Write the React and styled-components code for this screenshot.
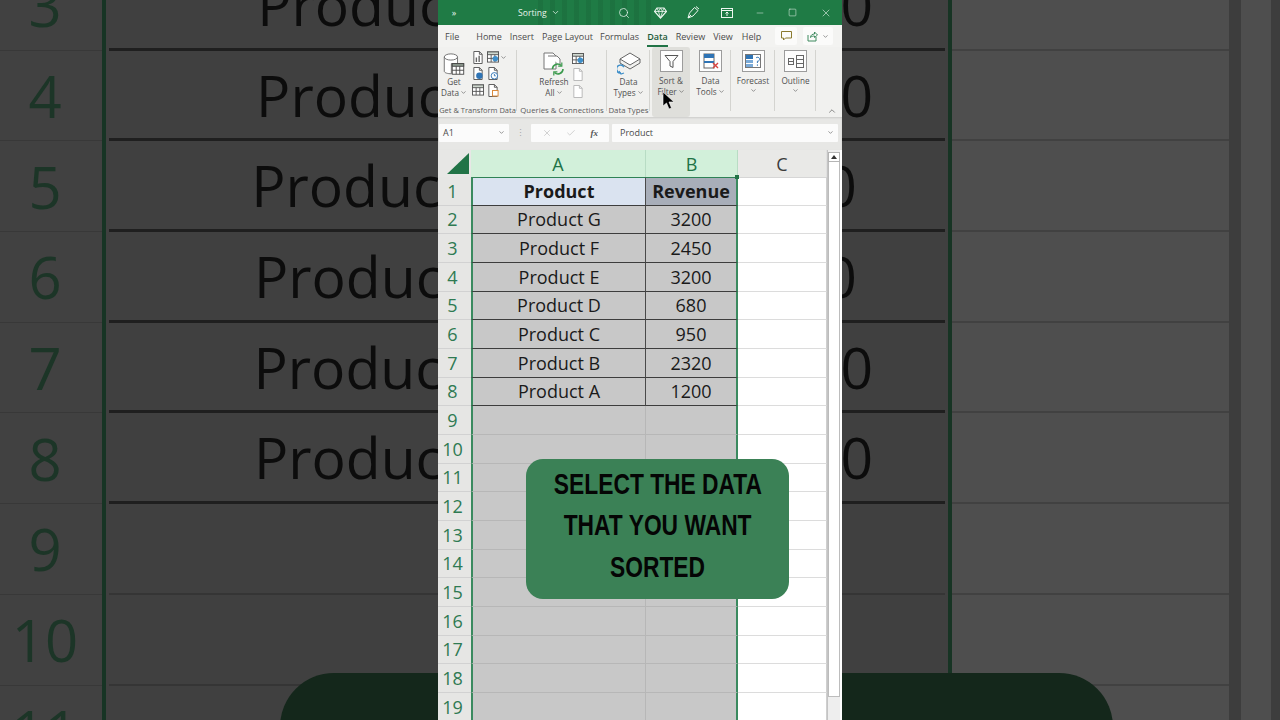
import React from "react";
import styled, { createGlobalStyle } from "styled-components";
import { ChevronDown, ChevronUp, Minus, Search, Square, X, Check } from "lucide-react";

const UI_FONT = `"Open Sans", "Noto Sans", sans-serif`;

const GlobalStyle = createGlobalStyle`
  html, body {
    margin: 0;
    padding: 0;
    width: 100%;
    height: 100%;
    overflow: hidden;
    background: #404040;
  }
  * { box-sizing: border-box; }
`;

const Page = styled.div`
  position: relative;
  display: flex;
  width: 1280px;
  height: 720px;
  overflow: hidden;
`;

/* dimmed, zoomed copy of the sheet behind the video */
const SidePanel = styled.div`
  width: 438px;
  flex-shrink: 0;
  height: 720px;
  overflow: hidden;
  background: #404040;
`;

const BackRows = styled.div`
  margin-top: -40px;
`;

const BackRow = styled.div`
  display: flex;
  height: 90.7px;
`;

const BackNumber = styled.div`
  width: 102px;
  flex-shrink: 0;
  display: flex;
  align-items: center;
  justify-content: center;
  padding-right: 12px;
  border-bottom: 1px solid #383838;
  color: #1c3527;
  font: 400 58px ${UI_FONT};
  background: #414141;
`;

const BackEdge = styled.div`
  width: 4px;
  flex-shrink: 0;
  margin-left: ${(p) => p.$offset || 0}px;
  background: #173424;
`;

const BackCell = styled.div`
  width: ${(p) => p.$width}px;
  flex-shrink: 0;
  margin-left: ${(p) => p.$offset}px;
  display: flex;
  align-items: center;
  justify-content: center;
  white-space: nowrap;
  border-bottom: ${(p) => (p.$filled ? "3px solid #1f1f1f" : "2px solid #353535")};
  color: #0c0c0c;
  font: 400 57px ${UI_FONT};
`;

const BackBlank = styled.div`
  width: 277px;
  flex-shrink: 0;
  background: #4e4e4e;
  border-bottom: 2px solid #414141;
`;

const BackScroll = styled.div`
  flex-shrink: 0;
  width: 52px;
  background: #4e4e4e;
  border-left: 12px solid #3d3d3d;
  border-right: 10px solid #3d3d3d;
`;

const BigCallout = styled.div`
  position: absolute;
  left: 280px;
  top: 673px;
  width: 833px;
  height: 440px;
  border-radius: 54px;
  background: #14271b;
  padding-top: 35px;
  text-align: center;
`;

const BigCalloutText = styled.span`
  display: inline-block;
  transform: scaleX(0.76);
  white-space: nowrap;
  color: #020402;
  font: 700 96px "Liberation Sans", sans-serif;
  line-height: 1;
`;

/* the Excel window */
const Window = styled.div`
  position: relative;
  z-index: 1;
  width: 404px;
  flex-shrink: 0;
  height: 720px;
  display: flex;
  flex-direction: column;
  background: #fff;
  overflow: hidden;
`;

const TitleBar = styled.div`
  height: 25px;
  flex-shrink: 0;
  display: flex;
  align-items: center;
  color: #e8f3ec;
  background-color: #1f7b45;
  background-image: repeating-linear-gradient(90deg, rgba(0, 0, 0, 0.07) 0 5px, transparent 5px 12px);
  background-size: 120px 100%;
  background-position: 100px 0;
  background-repeat: no-repeat;
  font: 400 8.6px ${UI_FONT};
`;

const More = styled.span`
  width: 32px;
  flex-shrink: 0;
  text-align: center;
  font-size: 9px;
`;

const DocName = styled.span`
  margin-left: 48px;
  width: 90px;
  flex-shrink: 0;
  display: flex;
  align-items: center;
  gap: 4px;
`;

const TitleIcon = styled.span`
  width: ${(p) => p.$width || 33}px;
  height: 25px;
  flex-shrink: 0;
  display: flex;
  align-items: center;
  justify-content: ${(p) => (p.$width ? "flex-start" : "center")};
  padding-left: ${(p) => (p.$width ? 10 : 0)}px;
`;

const TabBar = styled.div`
  height: 22px;
  flex-shrink: 0;
  display: flex;
  align-items: center;
  background: #f3f3f1;
  padding: 0 9px 0 7px;
  font: 400 9px ${UI_FONT};
  color: #4a4a4a;
`;

const Tab = styled.span`
  position: relative;
  margin-right: ${(p) => p.$gap}px;
  white-space: nowrap;
  color: ${(p) => (p.$active ? "#1d5c3a" : "#4a4a4a")};
  font-weight: ${(p) => (p.$active ? 600 : 400)};

  &::after {
    content: "";
    display: ${(p) => (p.$active ? "block" : "none")};
    position: absolute;
    left: 0;
    right: 0;
    bottom: -4px;
    height: 2px;
    background: #217346;
  }
`;

const TabActions = styled.div`
  margin-left: auto;
  display: flex;
  gap: 6px;
`;

const TabAction = styled.span`
  height: 18px;
  display: flex;
  align-items: center;
  justify-content: center;
  gap: 4px;
  width: ${(p) => p.$width}px;
  background: #fbfbfa;
  border-radius: 2px;
`;

const Ribbon = styled.div`
  height: 70px;
  flex-shrink: 0;
  display: flex;
  background: #f1f1ef;
  font: 400 8.2px ${UI_FONT};
  color: #505050;
`;

const Group = styled.div`
  position: relative;
  width: ${(p) => p.$width}px;
  flex-shrink: 0;
  display: flex;
  flex-direction: column;
  &::after {
    content: "";
    display: ${(p) => (p.$plain ? "none" : "block")};
    position: absolute;
    right: 0;
    top: 3px;
    bottom: 6px;
    width: 1px;
    background: #d4d4d0;
  }
`;

const GroupBody = styled.div`
  flex: 1;
  min-height: 0;
  display: flex;
  justify-content: ${(p) => p.$justify || "center"};
  gap: ${(p) => p.$gap || 0}px;
  padding: ${(p) => p.$padding || "0"};
`;

const GroupLabel = styled.div`
  height: 14px;
  display: flex;
  justify-content: center;
  white-space: nowrap;
  font-size: ${(p) => p.$size || 7.8}px;
  line-height: 14px;
  color: #5a5a5a;
`;

const RibbonButton = styled.div`
  display: flex;
  flex-direction: column;
  align-items: center;
  flex-shrink: 0;
  width: ${(p) => p.$width || 38}px;
  padding-top: ${(p) => p.$top ?? 3}px;
  border-radius: 3px;
  background: ${(p) => (p.$hover ? "#dfdfdb" : "transparent")};
  line-height: 11px;
  text-align: center;
`;

const ButtonText = styled.div`
  margin-top: ${(p) => p.$top ?? 2}px;
  display: flex;
  align-items: center;
  justify-content: center;
  gap: 1px;
  white-space: nowrap;
`;

const IconBox = styled.div`
  width: 23px;
  height: 22px;
  display: flex;
  align-items: center;
  justify-content: center;
  background: #fdfdfd;
  border: 1px solid #9c9c9c;
`;

const IconGrid = styled.div`
  display: grid;
  grid-template-columns: ${(p) => p.$columns};
  grid-auto-rows: ${(p) => p.$row}px;
  justify-items: start;
  align-items: center;
`;

const IconWithCaret = styled.span`
  display: flex;
  align-items: center;
  gap: 1px;
`;

const Collapse = styled.div`
  flex: 1;
  display: flex;
  align-items: flex-end;
  justify-content: flex-end;
  padding: 0 5px 1px 0;
`;

const FormulaBar = styled.div`
  height: 33px;
  flex-shrink: 0;
  display: flex;
  align-items: center;
  padding: 0 4px 2px 1px;
  background: #e7e7e5;
  box-shadow: inset 0 1px 2px rgba(0, 0, 0, 0.12);
  font: 400 9px ${UI_FONT};
  color: #4a4a4a;
`;

const FieldBox = styled.div`
  height: 18px;
  width: ${(p) => p.$width}px;
  margin-right: ${(p) => p.$gap || 0}px;
  flex-shrink: ${(p) => (p.$grow ? 1 : 0)};
  flex-grow: ${(p) => (p.$grow ? 1 : 0)};
  display: flex;
  align-items: center;
  justify-content: ${(p) => p.$justify || "space-between"};
  padding: 0 4px 0 ${(p) => p.$left || 4}px;
  background: #fbfbfb;
  border-radius: 1px;
`;

const Dots = styled.span`
  width: 22px;
  text-align: center;
  color: #a8a8a8;
  font-size: 9px;
`;

const FxLabel = styled.span`
  font: italic 700 9px "Liberation Serif", serif;
  color: #555;
`;

const SheetWrap = styled.div`
  flex: 1;
  display: flex;
  min-height: 0;
  background: #e7e7e5;
`;

const Grid = styled.div`
  width: 389px;
  flex-shrink: 0;
  display: grid;
  grid-template-columns: 33px 175px 92px 89px;
  grid-template-rows: 27px;
  grid-auto-rows: 28.67px;
  background: #fff;
  font: 400 18px ${UI_FONT};
`;

const Corner = styled.div`
  display: flex;
  align-items: flex-end;
  justify-content: flex-end;
  padding: 0 2px 3px 0;
  background: #e7e7e5;
`;

const ColumnHead = styled.div`
  display: flex;
  align-items: center;
  justify-content: center;
  padding-top: 1px;
  background: ${(p) => (p.$selected ? "#d2f0da" : "#e9e9e7")};
  color: ${(p) => (p.$selected ? "#217346" : "#3c3c3c")};
  border-right: 1px solid ${(p) => (p.$selected ? "#b8dcc4" : "#e0e0e0")};
`;

const RowHead = styled.div`
  display: flex;
  align-items: center;
  justify-content: center;
  padding-right: 4px;
  background: #e6e6e4;
  color: #2f7a52;
  border-bottom: 1px solid #d2d2d2;
`;

const Cell = styled.div`
  position: relative;
  display: flex;
  align-items: center;
  justify-content: center;
  white-space: nowrap;
  color: #1a1a1a;
  background: ${(p) => p.$bg};
  font-weight: ${(p) => (p.$bold ? 700 : 400)};
  border-bottom: 1px solid ${(p) => (p.$filled ? "#3d3d3d" : "#b7b7b7")};
  border-right: 1px solid ${(p) => (p.$filled ? "#4a4a4a" : "#b7b7b7")};
  border-left: ${(p) => (p.$edge === "left" ? "2px solid #3a8a5f" : "0")};
  border-top: ${(p) => (p.$top ? "1px solid #2f8256" : "0")};
  ${(p) => p.$edge === "right" && "border-right: 2px solid #3a8a5f;"}
`;

const Handle = styled.span`
  position: absolute;
  right: -3px;
  top: -3px;
  width: 4px;
  height: 4px;
  background: #217346;
`;

const EmptyCell = styled.div`
  border-bottom: 1px solid #dcdcdc;
  border-right: 1px solid #cfcfcf;
  border-top: ${(p) => (p.$top ? "1px solid #d6d6d6" : "0")};
`;

const Scrollbar = styled.div`
  width: 13px;
  flex-shrink: 0;
  display: flex;
  flex-direction: column;
  padding-top: 2px;
  background: #eeeeee;
  border-left: 1px solid #c4c4c4;
`;

const ScrollButton = styled.div`
  height: 10px;
  display: flex;
  align-items: center;
  justify-content: center;
  background: #fff;
  border: 1px solid #b5b5b5;
`;

const ScrollThumb = styled.div`
  height: 535px;
  background: #fff;
  border: 1px solid #bcbcbc;
  border-top: 0;
`;

const WindowEdge = styled.div`
  width: 2px;
  flex-shrink: 0;
  background: #fff;
`;

const Callout = styled.div`
  position: absolute;
  left: 88px;
  top: 459px;
  width: 263px;
  height: 140px;
  display: flex;
  flex-direction: column;
  align-items: center;
  justify-content: center;
  padding-bottom: 8px;
  border-radius: 17px;
  background: #3b8156;
`;

const CalloutLine = styled.span`
  display: block;
  height: 41.5px;
  white-space: nowrap;
  transform: scaleX(0.76);
  color: #050505;
  font: 700 30px/41.5px "Liberation Sans", sans-serif;
`;

const Pointer = styled.svg`
  position: absolute;
  left: 224px;
  top: 91px;
`;

const Caret = () => <ChevronDown size={7} strokeWidth={2} color="#555" />;

const PageIcon = ({ tint = "#555", children, size = 12 }) => (
  <svg width={size} height={size + 1} viewBox="0 0 13 14" fill="none">
    <path d="M2 .5h6l3 3v10H2z" fill="#fff" stroke={tint} strokeWidth="1" />
    <path d="M8 .5v3h3" stroke={tint} strokeWidth="1" />
    {children}
  </svg>
);

const TableIcon = ({ w = 12, h = 12, accent }) => (
  <svg width={w} height={h} viewBox="0 0 13 12" fill="none">
    <rect x=".5" y=".5" width="12" height="11" fill="#fff" stroke="#555" />
    <rect x=".5" y=".5" width="12" height="3" fill="#cfd8cf" stroke="#555" />
    <path d="M4.5 3.5v8M8.5 3.5v8M.5 7.5h12" stroke="#555" />
    {accent && <circle cx="9" cy="8" r="3" fill={accent} />}
  </svg>
);

const GetDataIcon = () => (
  <svg width="22" height="23" viewBox="0 0 24 26" fill="none">
    <path d="M1 4.5v16c0 2 4 3 8 3V12h7V4.5" fill="#fff" stroke="#666" />
    <ellipse cx="8.5" cy="4.5" rx="7.5" ry="3.5" fill="#fff" stroke="#666" />
    <rect x="10" y="12" width="13" height="12" fill="#fff" stroke="#444" />
    <rect x="10" y="12" width="13" height="3" fill="#8d9a8f" stroke="#444" />
    <path d="M14.5 15v9M18.5 15v9M10 19.5h13" stroke="#444" />
  </svg>
);

const RefreshIcon = () => (
  <svg width="22" height="24" viewBox="0 0 22 24" fill="none">
    <path d="M1 1h9l3 3v13H1z" fill="#fff" stroke="#777" />
    <path d="M5 4h9l3 3v6" fill="#fff" stroke="#777" />
    <path d="M9.5 17a5 5 0 0 1 8.5-3.5M20 17a5 5 0 0 1-8.5 3.5" stroke="#3b9a4d" strokeWidth="1.6" />
    <path d="M18.8 10.5v3.6h-3.6M10.8 23.5v-3.6h3.6" stroke="#3b9a4d" strokeWidth="1.2" />
  </svg>
);

const DataTypesIcon = () => (
  <svg width="24" height="24" viewBox="0 0 24 24" fill="none">
    <path d="M13 1l10 6-10 6-10-6z" fill="#fff" stroke="#666" />
    <path d="M3 11l10 6 10-6" stroke="#666" />
    <path d="M3 7v4M23 7v4" stroke="#666" />
    <path d="M7 15a4 4 0 1 0-3 6" stroke="#3f8fc9" strokeWidth="1.5" />
    <path d="M2 19l2 3 3-1" stroke="#3f8fc9" strokeWidth="1.2" />
  </svg>
);

const FilterIcon = () => (
  <svg width="15" height="15" viewBox="0 0 15 15" fill="none">
    <path d="M1 1.5h13L9 7.5v6l-3-1.5V7.5z" stroke="#555" strokeWidth="1" />
  </svg>
);

const DataToolsIcon = () => (
  <svg width="16" height="17" viewBox="0 0 16 17" fill="none">
    <rect x="1" y="1" width="10" height="14" fill="#fff" stroke="#666" />
    <rect x="1" y="1" width="10" height="4" fill="#2f74b5" />
    <rect x="1" y="8" width="10" height="2" fill="#2f74b5" />
    <path d="M10 10l5 5M15 10l-5 5" stroke="#d9433f" strokeWidth="1.4" />
  </svg>
);

const ForecastIcon = () => (
  <svg width="16" height="14" viewBox="0 0 16 14" fill="none">
    <rect x=".5" y=".5" width="15" height="13" fill="#fff" stroke="#777" />
    <rect x="1" y="1" width="7" height="4" fill="#2f74b5" />
    <rect x="1" y="6" width="7" height="3" fill="#7aaad8" />
    <rect x="1" y="10" width="7" height="3" fill="#7aaad8" />
    <path d="M11 4a2 2 0 1 1 1.4 3.2V9M12.4 10.4v1.4" stroke="#2f74b5" />
  </svg>
);

const OutlineIcon = () => (
  <svg width="16" height="13" viewBox="0 0 16 13" fill="none">
    <rect x=".5" y="3.5" width="5" height="6" stroke="#666" />
    <rect x="8.5" y=".5" width="7" height="12" stroke="#666" />
    <path d="M8.5 4.5h7M8.5 8.5h7M.5 6.5h5" stroke="#666" />
  </svg>
);

const GemIcon = () => (
  <svg width="13" height="12" viewBox="0 0 13 12" fill="none" stroke="#eef6f0" strokeWidth="1.2">
    <path d="M3 1h7l2.500 3.500L6.500 11 .5 4.500z" />
    <path d="M.5 4.500h12M4.500 4.500l2 6.500 2-6.500M3 1l1.500 3.500L6.500 1l2 3.500L10 1" strokeWidth=".8" />
  </svg>
);

const PenIcon = () => (
  <svg width="13" height="13" viewBox="0 0 13 13" fill="none" stroke="#eef6f0" strokeWidth="1">
    <path d="M1 12l1.500-5 5-5.500 3.500 3-5 5.500z" />
    <path d="M9 .5l3 2.500" />
    <path d="M1 12l3-3" />
  </svg>
);

const RibbonDisplayIcon = () => (
  <svg width="12" height="10" viewBox="0 0 12 10" fill="none" stroke="#eef6f0">
    <rect x=".5" y=".5" width="11" height="9" />
    <path d="M.5 2.500h11M6 8V4M4.500 5.500L6 4l1.500 1.500" />
  </svg>
);

const CommentIcon = () => (
  <svg width="11" height="10" viewBox="0 0 11 10" fill="none" stroke="#8a7a2e">
    <path d="M.5.500h10v6.500H4.500L2.500 9V7h-2z" />
  </svg>
);

const ShareIcon = () => (
  <svg width="11" height="11" viewBox="0 0 11 11" fill="none" stroke="#3e8a5f">
    <path d="M1 4v6h8V6" />
    <path d="M3.500 6.500c0-2.500 2-3.500 4-3.500V1l3 3-3 2.500V5c-1.500 0-3 .3-4 1.500z" />
  </svg>
);

const bigLeft = [
  ["3", "Product F"],
  ["4", "Product E"],
  ["5", "Product D"],
  ["6", "Product C"],
  ["7", "Product B"],
  ["8", "Product A"],
  ["9", ""],
  ["10", ""],
  ["11", ""],
];

const bigRight = ["2450", "3200", "680", "950", "2320", "1200", "", "", ""];

const tableRows = [
  ["Product G", "3200"],
  ["Product F", "2450"],
  ["Product E", "3200"],
  ["Product D", "680"],
  ["Product C", "950"],
  ["Product B", "2320"],
  ["Product A", "1200"],
];

const tabs = [
  ["File", 17],
  ["Home", 8],
  ["Insert", 8],
  ["Page Layout", 7],
  ["Formulas", 8],
  ["Data", 8, true],
  ["Review", 8],
  ["View", 9],
  ["Help", 0],
];

const rowNumbers = Array.from({ length: 19 }, (_, i) => i + 1);

function App() {
  return (
    <Page>
      <GlobalStyle />

      <SidePanel>
        <BackRows>
          {bigLeft.map(([num, label]) => (
            <BackRow key={num}>
              <BackNumber>{num}</BackNumber>
              <BackEdge />
              <BackCell $width={550} $offset={3} $filled={!!label}>
                {label}
              </BackCell>
            </BackRow>
          ))}
        </BackRows>
      </SidePanel>

      <Window>
        <TitleBar>
          <More>»</More>
          <DocName>
            Sorting <ChevronDown size={9} strokeWidth={2} />
          </DocName>
          <TitleIcon $width={36}><Search size={12} strokeWidth={1.5} /></TitleIcon>
          <TitleIcon><GemIcon /></TitleIcon>
          <TitleIcon><PenIcon /></TitleIcon>
          <TitleIcon><RibbonDisplayIcon /></TitleIcon>
          <TitleIcon><Minus size={10} strokeWidth={1.2} /></TitleIcon>
          <TitleIcon><Square size={9} strokeWidth={1.4} /></TitleIcon>
          <TitleIcon><X size={12} strokeWidth={1.2} /></TitleIcon>
        </TitleBar>

        <TabBar>
          {tabs.map(([label, gap, active]) => (
            <Tab key={label} $gap={gap} $active={active}>{label}</Tab>
          ))}
          <TabActions>
            <TabAction $width={22}><CommentIcon /></TabAction>
            <TabAction $width={30}><ShareIcon /><Caret /></TabAction>
          </TabActions>
        </TabBar>

        <Ribbon>
          <Group $width={79}>
            <GroupBody $justify="flex-start" $gap={5} $padding="2px 0 0 3px">
              <RibbonButton $width={26} $top={4}>
                <GetDataIcon />
                <ButtonText $top={0}>Get</ButtonText>
                <ButtonText $top={0}>Data <Caret /></ButtonText>
              </RibbonButton>
              <IconGrid $columns="15px 22px" $row={16.5}>
                <PageIcon><path d="M4 7h1.500v5H4zM7 5h1.500v7H7z" fill="#666" /></PageIcon>
                <IconWithCaret><TableIcon accent="#3f8fc9" /><Caret /></IconWithCaret>
                <PageIcon><circle cx="8" cy="9.500" r="3.500" fill="#2f74b5" /></PageIcon>
                <PageIcon><circle cx="8" cy="9.500" r="3.500" fill="#fff" stroke="#2f74b5" /><path d="M8 7.500v2h1.500" stroke="#2f74b5" /></PageIcon>
                <TableIcon />
                <PageIcon><rect x="6" y="7" width="6" height="6" fill="#fff" stroke="#d9832f" /></PageIcon>
              </IconGrid>
            </GroupBody>
            <GroupLabel $size={7.5}>Get &amp; Transform Data</GroupLabel>
          </Group>

          <Group $width={90}>
            <GroupBody $justify="flex-start" $padding="3px 0 0 19px">
              <RibbonButton $width={36} $top={2}>
                <RefreshIcon />
                <ButtonText $top={0}>Refresh</ButtonText>
                <ButtonText $top={0}>All <Caret /></ButtonText>
              </RibbonButton>
              <IconGrid $columns="14px" $row={16.5}>
                <TableIcon h={11} accent="#3f8fc9" />
                <PageIcon tint="#b5b5b5" />
                <PageIcon tint="#b5b5b5" />
              </IconGrid>
            </GroupBody>
            <GroupLabel>Queries &amp; Connections</GroupLabel>
          </Group>

          <Group $width={43}>
            <GroupBody>
              <RibbonButton $width={42} $top={5}>
                <DataTypesIcon />
                <ButtonText $top={0}>Data</ButtonText>
                <ButtonText $top={0}>Types <Caret /></ButtonText>
              </RibbonButton>
            </GroupBody>
            <GroupLabel>Data Types</GroupLabel>
          </Group>

          <Group $width={40} $plain>
            <GroupBody $justify="flex-end">
              <RibbonButton $width={38} $hover $top={3}>
                <IconBox><FilterIcon /></IconBox>
                <ButtonText $top={3}>Sort &amp;</ButtonText>
                <ButtonText $top={0}>Filter <Caret /></ButtonText>
              </RibbonButton>
            </GroupBody>
          </Group>

          <Group $width={41}>
            <GroupBody>
              <RibbonButton $top={3}>
                <IconBox><DataToolsIcon /></IconBox>
                <ButtonText $top={3}>Data</ButtonText>
                <ButtonText $top={0}>Tools <Caret /></ButtonText>
              </RibbonButton>
            </GroupBody>
          </Group>

          <Group $width={44}>
            <GroupBody>
              <RibbonButton $width={43} $top={3}>
                <IconBox><ForecastIcon /></IconBox>
                <ButtonText $top={3}>Forecast</ButtonText>
                <ButtonText $top={1}><Caret /></ButtonText>
              </RibbonButton>
            </GroupBody>
          </Group>

          <Group $width={41}>
            <GroupBody>
              <RibbonButton $width={40} $top={3}>
                <IconBox><OutlineIcon /></IconBox>
                <ButtonText $top={3}>Outline</ButtonText>
                <ButtonText $top={1}><Caret /></ButtonText>
              </RibbonButton>
            </GroupBody>
          </Group>

          <Collapse>
            <ChevronUp size={10} strokeWidth={1.6} color="#555" />
          </Collapse>
        </Ribbon>

        <FormulaBar>
          <FieldBox $width={70}>A1 <Caret /></FieldBox>
          <Dots>⋮</Dots>
          <FieldBox $width={78} $gap={3} $justify="space-around">
            <X size={10} strokeWidth={1.2} color="#a8a8a8" />
            <Check size={10} strokeWidth={1.2} color="#a8a8a8" />
            <FxLabel>fx</FxLabel>
          </FieldBox>
          <FieldBox $grow $left={8}>Product <Caret /></FieldBox>
        </FormulaBar>

        <SheetWrap>
          <Grid>
            <Corner>
              <svg width="22" height="21" viewBox="0 0 22 21"><path d="M22 0v21H0z" fill="#217346" /></svg>
            </Corner>
            <ColumnHead $selected>A</ColumnHead>
            <ColumnHead $selected>B</ColumnHead>
            <ColumnHead>C</ColumnHead>

            {rowNumbers.map((n) => {
              const data = n > 1 ? tableRows[n - 2] : null;
              const filled = n <= 8;
              return (
                <React.Fragment key={n}>
                  <RowHead>{n}</RowHead>
                  <Cell
                    $edge="left"
                    $top={n === 1}
                    $filled={filled}
                    $bold={n === 1}
                    $bg={n === 1 ? "#dae3f0" : "#c8c8c8"}
                  >
                    {n === 1 ? "Product" : data && data[0]}
                  </Cell>
                  <Cell
                    $edge="right"
                    $top={n === 1}
                    $filled={filled}
                    $bold={n === 1}
                    $bg={n === 1 ? "#a8aeb9" : "#c8c8c8"}
                  >
                    {n === 1 ? "Revenue" : data && data[1]}
                    {n === 1 && <Handle />}
                  </Cell>
                  <EmptyCell $top={n === 1} />
                </React.Fragment>
              );
            })}
          </Grid>

          <Scrollbar>
            <ScrollButton>
              <svg width="6" height="4" viewBox="0 0 6 4"><path d="M3 0l3 4H0z" fill="#333" /></svg>
            </ScrollButton>
            <ScrollThumb />
          </Scrollbar>
          <WindowEdge />
        </SheetWrap>

        <Pointer width="13" height="19" viewBox="0 0 13 19">
          <path d="M1 1v14l3.500-3 2.500 6 2.500-1-2.500-6h5z" fill="#000" stroke="#fff" strokeWidth=".6" />
        </Pointer>

        <Callout>
          <CalloutLine>SELECT THE DATA</CalloutLine>
          <CalloutLine>THAT YOU WANT</CalloutLine>
          <CalloutLine>SORTED</CalloutLine>
        </Callout>
      </Window>

      <SidePanel>
        <BackRows>
          {bigRight.map((value, i) => (
            <BackRow key={i}>
              <BackCell $width={274} $offset={-171} $filled={!!value}>
                {value}
              </BackCell>
              <BackEdge $offset={3} />
              <BackBlank />
              <BackScroll />
            </BackRow>
          ))}
        </BackRows>
      </SidePanel>

      <BigCallout>
        <BigCalloutText>SELECT THE DATA</BigCalloutText>
      </BigCallout>
    </Page>
  );
}

export default App;
